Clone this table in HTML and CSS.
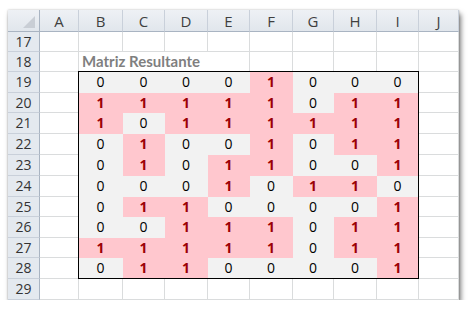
FILE: index.html
```html
<!DOCTYPE html>
<html>
<head>
<meta charset="utf-8">
<link rel="stylesheet" href="styles.css">
</head>
<body>
<div class="page">
  <div class="sheet">
    <div class="ch corner"><svg class="tri" width="12" height="12" viewBox="0 0 12 12"><polygon points="0,12 12,12 12,0" fill="#c9ced5"/></svg></div>
    <div class="ch">A</div><div class="ch">B</div><div class="ch">C</div><div class="ch">D</div><div class="ch">E</div><div class="ch">F</div><div class="ch">G</div><div class="ch">H</div><div class="ch">I</div><div class="ch">J</div>

    <div class="rh">17</div><div class="c"></div><div class="c"></div><div class="c"></div><div class="c"></div><div class="c"></div><div class="c"></div><div class="c"></div><div class="c"></div><div class="c"></div><div class="c"></div>

    <div class="rh">18</div><div class="c"></div><div class="c title">Matriz Resultante</div><div class="c"></div><div class="c"></div><div class="c"></div><div class="c"></div><div class="c"></div>

    <div class="rh">19</div><div class="c"></div><div class="c z">0</div><div class="c z">0</div><div class="c z">0</div><div class="c z">0</div><div class="c o">1</div><div class="c z">0</div><div class="c z">0</div><div class="c z">0</div><div class="c"></div>

    <div class="rh">20</div><div class="c"></div><div class="c o">1</div><div class="c o">1</div><div class="c o">1</div><div class="c o">1</div><div class="c o">1</div><div class="c z">0</div><div class="c o">1</div><div class="c o">1</div><div class="c"></div>

    <div class="rh">21</div><div class="c"></div><div class="c o">1</div><div class="c z">0</div><div class="c o">1</div><div class="c o">1</div><div class="c o">1</div><div class="c o">1</div><div class="c o">1</div><div class="c o">1</div><div class="c"></div>

    <div class="rh">22</div><div class="c"></div><div class="c z">0</div><div class="c o">1</div><div class="c z">0</div><div class="c z">0</div><div class="c o">1</div><div class="c z">0</div><div class="c o">1</div><div class="c o">1</div><div class="c"></div>

    <div class="rh">23</div><div class="c"></div><div class="c z">0</div><div class="c o">1</div><div class="c z">0</div><div class="c o">1</div><div class="c o">1</div><div class="c z">0</div><div class="c z">0</div><div class="c o">1</div><div class="c"></div>

    <div class="rh">24</div><div class="c"></div><div class="c z">0</div><div class="c z">0</div><div class="c z">0</div><div class="c o">1</div><div class="c z">0</div><div class="c o">1</div><div class="c o">1</div><div class="c z">0</div><div class="c"></div>

    <div class="rh">25</div><div class="c"></div><div class="c z">0</div><div class="c o">1</div><div class="c o">1</div><div class="c z">0</div><div class="c z">0</div><div class="c z">0</div><div class="c z">0</div><div class="c o">1</div><div class="c"></div>

    <div class="rh">26</div><div class="c"></div><div class="c z">0</div><div class="c z">0</div><div class="c o">1</div><div class="c o">1</div><div class="c o">1</div><div class="c z">0</div><div class="c o">1</div><div class="c o">1</div><div class="c"></div>

    <div class="rh">27</div><div class="c"></div><div class="c o">1</div><div class="c o">1</div><div class="c o">1</div><div class="c o">1</div><div class="c o">1</div><div class="c z">0</div><div class="c o">1</div><div class="c o">1</div><div class="c"></div>

    <div class="rh">28</div><div class="c"></div><div class="c z">0</div><div class="c o">1</div><div class="c o">1</div><div class="c z">0</div><div class="c z">0</div><div class="c z">0</div><div class="c z">0</div><div class="c o">1</div><div class="c"></div>

    <div class="rh">29</div><div class="c"></div><div class="c"></div><div class="c"></div><div class="c"></div><div class="c"></div><div class="c"></div><div class="c"></div><div class="c"></div><div class="c"></div><div class="c"></div>

    <div class="frame"></div>
  </div>
</div>
</body>
</html>
```

FILE: styles.css
```css
html, body {
  margin: 0;
  padding: 0;
  background: #ffffff;
}

.page {
  padding: 10px 0 0 8px;
}

.sheet {
  position: relative;
  width: 451px;
  height: 290px;
  overflow: hidden;
  display: grid;
  grid-template-columns: 32px 39px 44px 42px 43px 42px 43px 41px 43px 42px 40px;
  grid-template-rows: 22px 20px 20px 21px 20px 21px 21px 21px 21px 20px 21px 20px 21px 21px;
  background: #ffffff;
  box-shadow: 2px 4px 5px rgba(0, 0, 0, 0.5), 0 0 2px rgba(0, 0, 0, 0.25);
  font-family: "Open Sans", "Noto Sans", sans-serif;
  font-size: 14px;
}

.ch, .rh, .c {
  box-sizing: border-box;
  display: flex;
  align-items: center;
  justify-content: center;
  line-height: 1;
}

.ch {
  background: linear-gradient(#eef1f5, #e1e6ec);
  border-right: 1px solid #c9d0da;
  border-bottom: 1px solid #a9b4c2;
  color: #3f3f3f;
  font-size: 15px;
  padding-top: 1px;
}

.corner {
  position: relative;
  align-items: flex-end;
  justify-content: flex-end;
  padding: 0 4px 3px 0;
  border-right: 1px solid #a9b4c2;
}

.tri {
  display: block;
}

.rh {
  background: #e4e9ef;
  border-right: 1px solid #a9b4c2;
  border-bottom: 1px solid #c9d0da;
  color: #333333;
  font-size: 14px;
}

.c {
  border-right: 1px solid #dadcdd;
  border-bottom: 1px solid #dadcdd;
  color: #000000;
}

.z {
  background: #f2f2f2;
  border-color: transparent;
}

.o {
  background: #ffc7ce;
  border-color: transparent;
  color: #9c0006;
  font-weight: 700;
}

.title {
  grid-column: span 4;
  justify-content: flex-start;
  padding-left: 3px;
  color: #7f7f7f;
  font-weight: 700;
  font-family: "Lato", "Open Sans", sans-serif;
  font-size: 15px;
}

.frame {
  position: absolute;
  grid-column: 3 / 11;
  grid-row: 4 / 14;
  top: -1px;
  left: -1px;
  right: 0;
  bottom: 0;
  border: 1px solid #000000;
  pointer-events: none;
}
```
